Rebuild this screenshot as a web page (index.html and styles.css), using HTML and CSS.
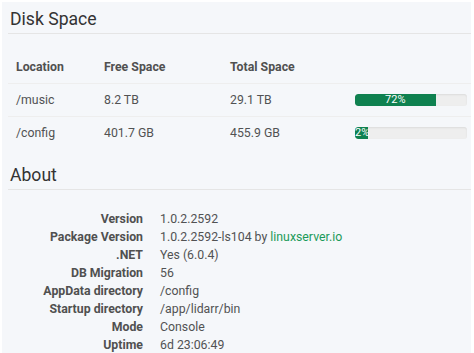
FILE: index.html
```html
<!DOCTYPE html>
<html lang="en">

<head>
    <meta charset="UTF-8">
    <title>Status</title>
    <link rel="stylesheet" href="styles.css">
</head>

<body>
    <div class="pagina">
        <div class="secao">
            <div class="titulo">Disk Space</div>

            <table class="disco">
                <thead>
                    <tr>
                        <th class="col-local">Location</th>
                        <th class="col-livre">Free Space</th>
                        <th class="col-total">Total Space</th>
                        <th></th>
                    </tr>
                </thead>
                <tbody>
                    <tr>
                        <td>/music</td>
                        <td>8.2 TB</td>
                        <td>29.1 TB</td>
                        <td>
                            <div class="barra">
                                <div class="barra-cheia" style="width: 72%;">72%</div>
                            </div>
                        </td>
                    </tr>
                    <tr>
                        <td>/config</td>
                        <td>401.7 GB</td>
                        <td>455.9 GB</td>
                        <td>
                            <div class="barra">
                                <div class="barra-cheia" style="width: 2%;">2%</div>
                            </div>
                        </td>
                    </tr>
                </tbody>
            </table>
        </div>

        <div class="secao">
            <div class="titulo">About</div>

            <dl class="sobre">
                <dt>Version</dt>
                <dd>1.0.2.2592</dd>
                <dt>Package Version</dt>
                <dd>1.0.2.2592-ls104 by <a href="#">linuxserver.io</a></dd>
                <dt>.NET</dt>
                <dd>Yes (6.0.4)</dd>
                <dt>DB Migration</dt>
                <dd>56</dd>
                <dt>AppData directory</dt>
                <dd>/config</dd>
                <dt>Startup directory</dt>
                <dd>/app/lidarr/bin</dd>
                <dt>Mode</dt>
                <dd>Console</dd>
                <dt>Uptime</dt>
                <dd>6d 23:06:49</dd>
            </dl>
        </div>
    </div>
</body>

</html>
```

FILE: styles.css
```css
body {
    margin: 0;
    padding: 0;
    font-family: 'Roboto', sans-serif;
    font-size: 12.3px;
    color: #515253;
    background: #ffffff;
}

.pagina {
    margin: 2px 3px 0 2px;
    padding: 0 0 0 6px;
    background-color: #f5f7fa;
    height: 351px;
    overflow: hidden;
}

.titulo {
    font-size: 17.6px;
    line-height: 27px;
    padding-top: 4px;
    padding-left: 2px;
    color: #333333;
    border-bottom: 1px solid #e5e5e5;
}

.disco {
    border-collapse: collapse;
    table-layout: fixed;
    margin-top: 15px;
    margin-bottom: 9px;
    width: 100%;
}

.disco th,
.disco td {
    text-align: left;
    padding: 8px;
    line-height: 16px;
    border-top: 1px solid #eeeeee;
}

.disco th {
    font-weight: bold;
    border-top: none;
    padding-top: 10px;
    padding-bottom: 8px;
    color: #505050;
}

.disco thead tr {
    border-bottom: 1px solid #eeeeee;
}

.col-local {
    width: 72px;
}

.col-livre {
    width: 110px;
}

.col-total {
    width: 109px;
}

.barra {
    width: 112px;
    height: 12px;
    background-color: #eeeeee;
    border-radius: 3px;
    box-shadow: inset 0 1px 2px rgba(0, 0, 0, 0.08);
    overflow: hidden;
}

.barra-cheia {
    min-width: 13px;
    height: 12px;
    background-color: #0f8150;
    color: #ffffff;
    font-size: 11px;
    line-height: 12px;
    text-align: center;
    border-radius: 3px 0 0 3px;
}

.sobre {
    display: grid;
    grid-template-columns: 135px 1fr;
    column-gap: 17px;
    margin: 20px 0 0 0;
    line-height: 18px;
}

.sobre dt {
    text-align: right;
    font-weight: bold;
    color: #505050;
}

.sobre dd {
    margin: 0;
}

.sobre a {
    color: #1b9a59;
    text-decoration: none;
}
```
